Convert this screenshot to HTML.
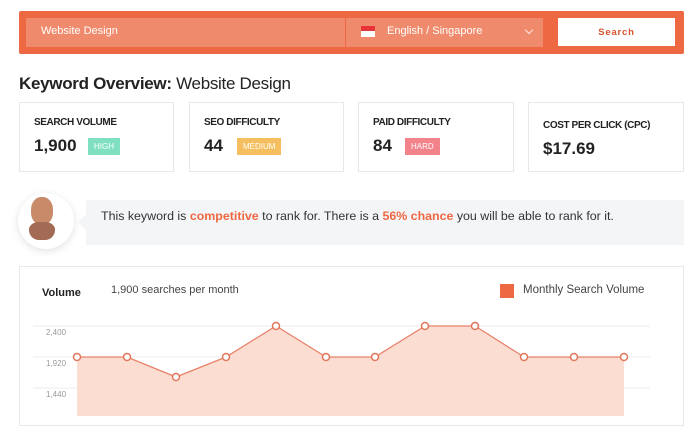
<!DOCTYPE html>
<html><head><meta charset="utf-8"><style>
*{margin:0;padding:0;box-sizing:border-box}
body{width:700px;height:416px;overflow:hidden;background:#fff;font-family:"Liberation Sans",sans-serif;position:relative;color:#222}
.abs{position:absolute}
.card{position:absolute;top:102px;height:70px;border:1px solid #e8e8e8;background:#fff}
.card .l{position:absolute;left:14px;top:14px;font-size:10px;font-weight:bold;letter-spacing:-0.4px}
.card .n{position:absolute;left:14px;top:33px;font-size:17px;font-weight:bold}
.tag{position:absolute;top:35px;height:17px;font-size:8px;color:#fff;line-height:17px;padding:0 6px}
</style></head><body>
<div class="abs" style="left:19px;top:11px;width:665px;height:43px;background:#ee6843;border-radius:2px"></div>
<div class="abs" style="left:26px;top:18px;width:319px;height:29px;background:#f08a6c"></div>
<div class="abs" style="left:346px;top:18px;width:197px;height:29px;background:#f08a6c"></div>
<div class="abs" style="left:41px;top:25px;font-size:11px;color:#fff">Website Design</div>
<div class="abs" style="left:361px;top:26px;width:14px;height:5px;background:#e8333a"></div>
<div class="abs" style="left:361px;top:31px;width:14px;height:6px;background:#fff"></div>
<div class="abs" style="left:387px;top:25px;font-size:11px;color:#fff">English / Singapore</div>
<div class="abs" style="left:526px;top:27px;width:6px;height:6px;border-right:1px solid #fff;border-bottom:1px solid #fff;transform:rotate(45deg);opacity:.8"></div>
<div class="abs" style="left:558px;top:18px;width:117px;height:28px;background:#fff;color:#d9542f;font-size:9.5px;font-weight:bold;text-align:center;line-height:29px;letter-spacing:.8px">Search</div>
<div class="abs" style="left:19px;top:74px;font-size:17px;letter-spacing:-0.3px"><b>Keyword Overview:</b> Website Design</div>
<div class="card" style="left:19px;width:155px"><div class="l">SEARCH VOLUME</div><div class="n">1,900</div><div class="tag" style="left:68px;background:#7ee0c0">HIGH</div></div>
<div class="card" style="left:189px;width:155px"><div class="l">SEO DIFFICULTY</div><div class="n">44</div><div class="tag" style="left:47px;background:#f5be5e">MEDIUM</div></div>
<div class="card" style="left:358px;width:156px"><div class="l">PAID DIFFICULTY</div><div class="n">84</div><div class="tag" style="left:46px;background:#f2838a">HARD</div></div>
<div class="card" style="left:528px;width:156px"><div class="l" style="top:17px">COST PER CLICK (CPC)</div><div class="n" style="top:36px">$17.69</div></div>
<div class="abs" style="left:18px;top:193px;width:56px;height:56px;border-radius:50%;background:#fff;box-shadow:0 2px 8px rgba(0,0,0,.12)"></div>
<div class="abs" style="left:31px;top:197px;width:22px;height:28px;border-radius:45%;background:#c98a6a"></div>
<div class="abs" style="left:29px;top:222px;width:26px;height:18px;border-radius:40% 40% 10px 10px;background:#a36b55"></div>
<div class="abs" style="left:86px;top:200px;width:598px;height:45px;background:#f4f5f7"></div>
<div class="abs" style="left:80px;top:217px;width:10px;height:10px;background:#f4f5f7;transform:rotate(45deg)"></div>
<div class="abs" style="left:101px;top:209px;font-size:12.4px;color:#333">This keyword is <b style="color:#ee6843">competitive</b> to rank for. There is a <b style="color:#ee6843">56% chance</b> you will be able to rank for it.</div>
<div class="abs" style="left:19px;top:266px;width:665px;height:160px;border:1px solid #e8e8e8"></div>
<div class="abs" style="left:42px;top:287px;font-size:11px;font-weight:bold">Volume</div>
<div class="abs" style="left:111px;top:284px;font-size:11px;color:#444">1,900 searches per month</div>
<div class="abs" style="left:500px;top:284px;width:14px;height:14px;background:#ee6843"></div>
<div class="abs" style="left:523px;top:284px;font-size:11.5px;color:#444">Monthly Search Volume</div>
<svg class="abs" style="left:0;top:0" width="700" height="416">
<g stroke="#eee" stroke-width="1"><line x1="33" y1="326" x2="650" y2="326"/><line x1="33" y1="357" x2="650" y2="357"/><line x1="33" y1="388" x2="650" y2="388"/></g>
<g font-size="8" fill="#999" font-family="Liberation Sans"><text x="46" y="335">2,400</text><text x="46" y="366">1,920</text><text x="46" y="397">1,440</text></g>
<path d="M77 357 L127 357 L176 377 L226 357 L276 326 L326 357 L375 357 L425 326 L475 326 L524 357 L574 357 L624 357 L624 416 L77 416Z" fill="#fbd9cd" opacity=".9"/>
<path d="M77 357 L127 357 L176 377 L226 357 L276 326 L326 357 L375 357 L425 326 L475 326 L524 357 L574 357 L624 357" fill="none" stroke="#e8826a" stroke-width="1.3"/>
<g fill="#fff" stroke="#e0765a" stroke-width="1.5">
<circle cx="77" cy="357" r="3.5"/><circle cx="127" cy="357" r="3.5"/><circle cx="176" cy="377" r="3.5"/><circle cx="226" cy="357" r="3.5"/><circle cx="276" cy="326" r="3.5"/><circle cx="326" cy="357" r="3.5"/><circle cx="375" cy="357" r="3.5"/><circle cx="425" cy="326" r="3.5"/><circle cx="475" cy="326" r="3.5"/><circle cx="524" cy="357" r="3.5"/><circle cx="574" cy="357" r="3.5"/><circle cx="624" cy="357" r="3.5"/></g>
</svg>
</body></html>
